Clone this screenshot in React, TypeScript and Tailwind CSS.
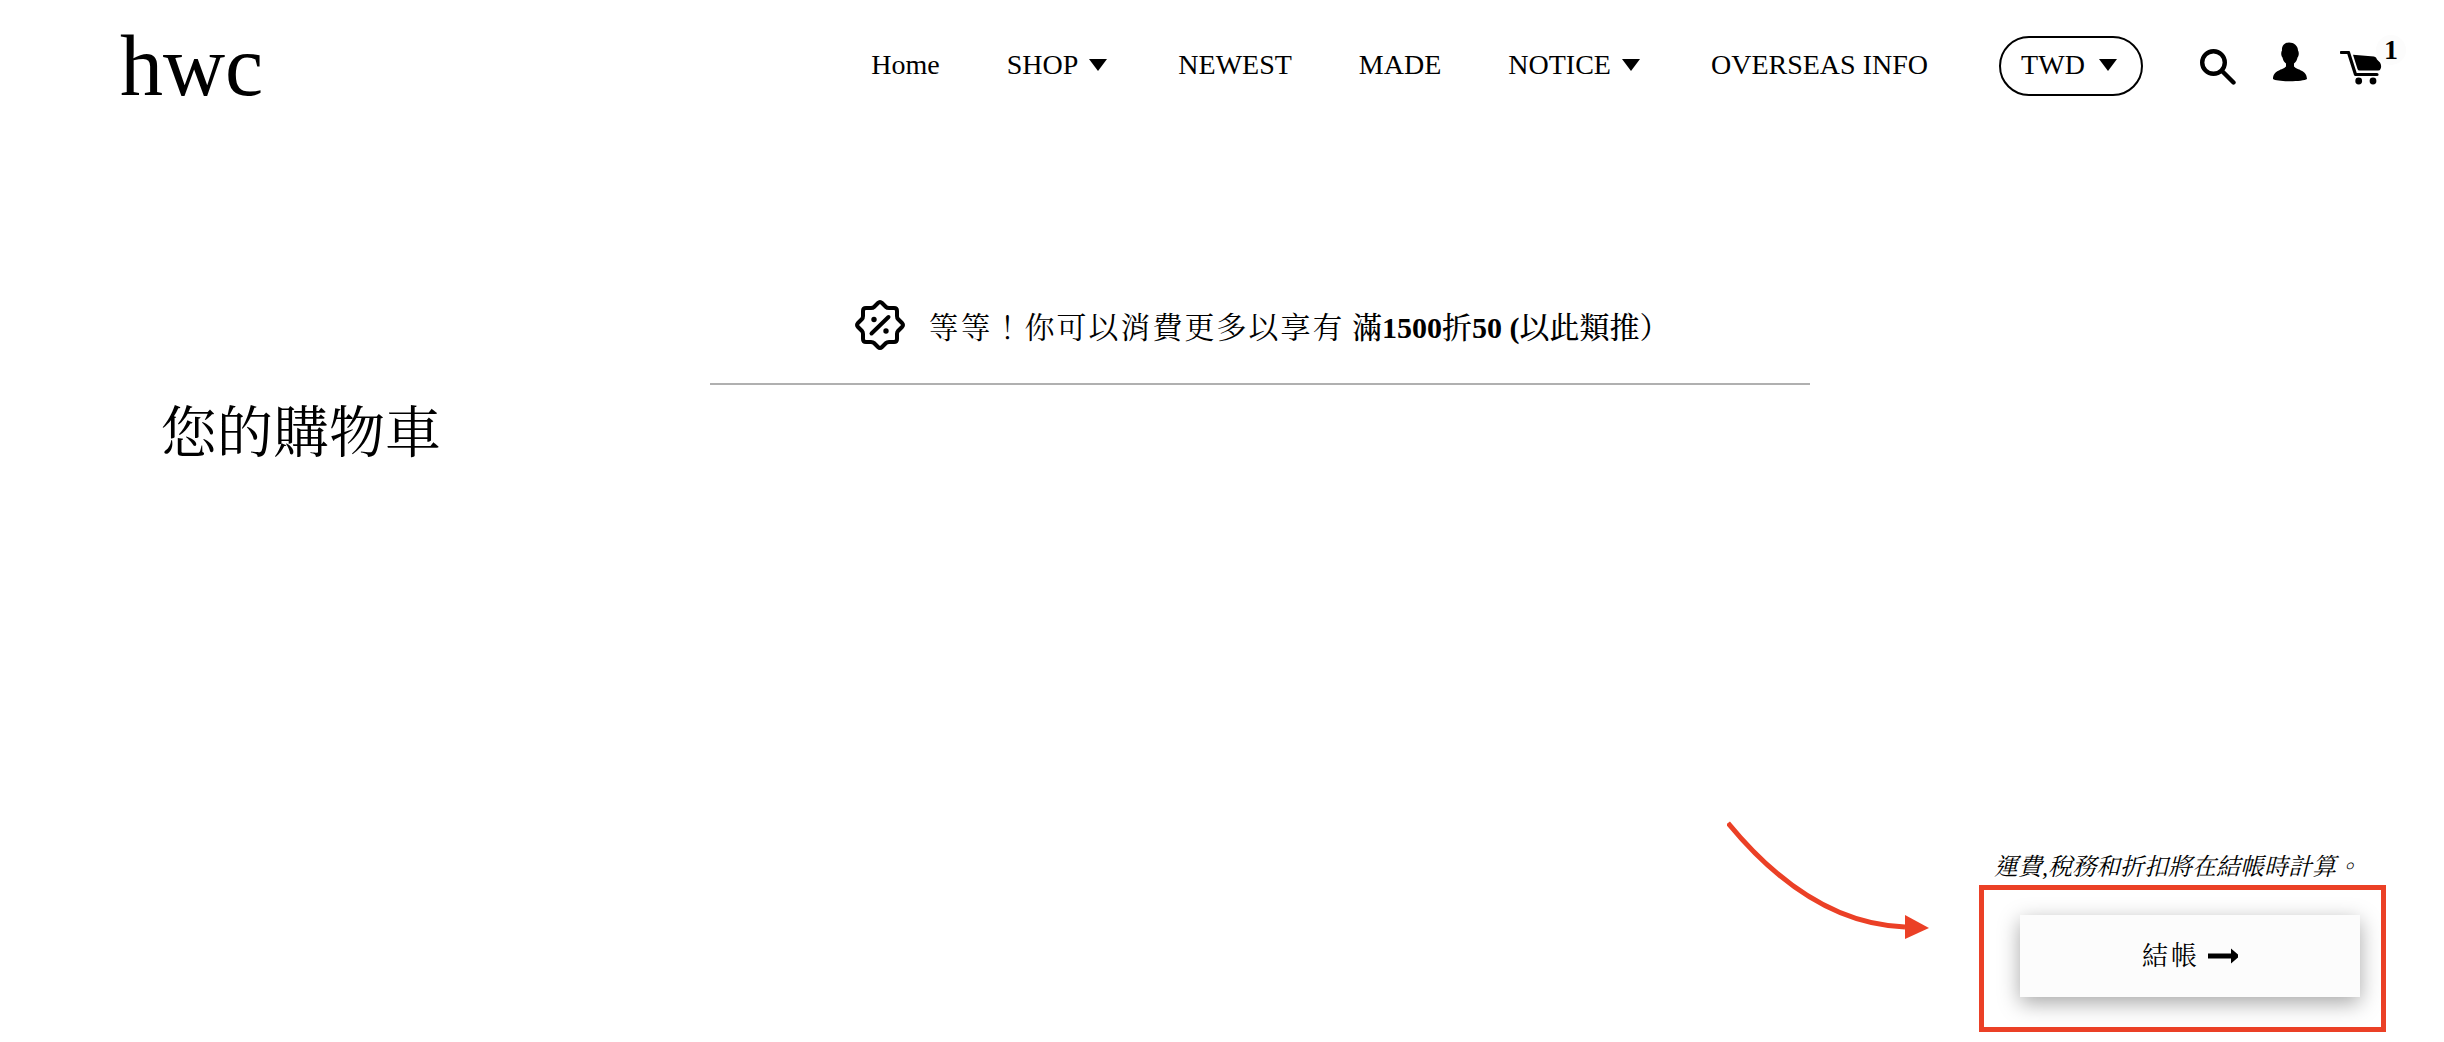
type NavItem = {
    label: string;
    href: string;
    dropdown?: boolean;
};

const navItems: NavItem[] = [
    { label: "Home", href: "#home" },
    { label: "SHOP", href: "#shop", dropdown: true },
    { label: "NEWEST", href: "#newest" },
    { label: "MADE", href: "#made" },
    { label: "NOTICE", href: "#notice", dropdown: true },
    { label: "OVERSEAS INFO", href: "#overseas" },
];

function Caret({ className }: { className?: string }) {
    return (
        <svg viewBox="0 0 18 12" className={className} aria-hidden="true">
            <path d="M0 0H18L9 12Z" fill="currentColor" />
        </svg>
    );
}

function SearchIcon() {
    return (
        <svg viewBox="0 0 36 36" className="size-9" fill="none" stroke="currentColor" strokeWidth="4.4" aria-hidden="true">
            <circle cx="13.5" cy="13.5" r="11.3" />
            <path d="M22 22L33.5 33.5" strokeLinecap="round" />
        </svg>
    );
}

function UserIcon() {
    return (
        <svg viewBox="0 0 36 40" className="h-10 w-9" fill="currentColor" aria-hidden="true">
            <path d="M17 0.5C22 0.5 26 4 26 8.5C27.2 10 27 14 25.5 15.5C25 18 24 20 22 21.5V24.5C25 28 35 28 35 37C31 40 5 40 1 37C1 28 11 28 14 24.5V21.5C12 20 11 18 10.5 15.5C9 14 8.8 10 10 8.5C9.5 4 12.5 0.5 17 0.5Z" />
        </svg>
    );
}

function CartIcon() {
    return (
        <svg viewBox="0 0 42 34" className="h-[34px] w-[42px]" fill="currentColor" aria-hidden="true">
            <path d="M1.5 1.5H8.5L15.5 23.5H37" fill="none" stroke="currentColor" strokeWidth="3.2" strokeLinecap="round" strokeLinejoin="round" />
            <path d="M13 3.7L34 5.6Q36.5 6 37 8.5L40 11.5Q42 15 40.5 18Q40 19.5 38 19.5H19.5Q18 19.5 17.5 18Z" />
            <circle cx="18.7" cy="30" r="3.4" />
            <circle cx="33" cy="30" r="3.4" />
        </svg>
    );
}

function DiscountIcon() {
    return (
        <svg viewBox="0 0 50 50" className="size-[50px]" fill="none" stroke="currentColor" strokeWidth="4" strokeLinecap="round" strokeLinejoin="round" aria-hidden="true">
            <path d="M8 11Q8 8 11 8H16Q18 8 19 7L23 3Q25 1 27 3L31 7Q32 8 34 8H39Q42 8 42 11V16Q42 18 43 19L47 23Q49 25 47 27L43 31Q42 32 42 34V39Q42 42 39 42H34Q32 42 31 43L27 47Q25 49 23 47L19 43Q18 42 16 42H11Q8 42 8 39V34Q8 32 7 31L3 27Q1 25 3 23L7 19Q8 18 8 16Z" />
            <path d="M16.5 33.5L33.5 17" />
            <circle cx="19" cy="19.5" r="2.7" fill="currentColor" stroke="none" />
            <circle cx="31" cy="31" r="2.7" fill="currentColor" stroke="none" />
        </svg>
    );
}

function Header() {
    return (
        <header className="flex items-center justify-between py-4 pr-[38px] pl-[120px]">
            <a href="#home" className="text-[86px] leading-[100px]">
                hwc
            </a>
            <div className="flex items-center">
                <nav className="flex items-center gap-[67px] pb-[2px] text-[28px] leading-8">
                    {navItems.map((item) => (
                        <a key={item.label} href={item.href} className="flex items-center gap-[11px]">
                            {item.label}
                            {item.dropdown && <Caret className="mr-1 h-3 w-[18px]" />}
                        </a>
                    ))}
                </nav>
                <button type="button" className="ml-[71px] flex h-[60px] w-36 items-center justify-center gap-[14px] rounded-full border-2 border-black pr-1 pb-[2px] text-[28px]">
                    TWD
                    <Caret className="h-3 w-[18px]" />
                </button>
                <button type="button" aria-label="搜尋" className="ml-[57px] pt-[2px]">
                    <SearchIcon />
                </button>
                <a href="#account" aria-label="帳戶" className="ml-9 pb-2">
                    <UserIcon />
                </a>
                <a href="#cart" aria-label="購物車" className="relative ml-8 pt-1 pr-6">
                    <CartIcon />
                    <span className="absolute -top-3 right-0 flex size-[30px] items-center justify-center rounded-full bg-[#fcfcfc] text-[28px] font-bold">
                        1
                    </span>
                </a>
            </div>
        </header>
    );
}

export default function App() {
    return (
        <div className="bg-white pb-3 font-['Liberation_Serif','Noto_Serif_CJK_TC','Noto_Sans_CJK_TC',serif] text-black">
            <Header />

            <main>
                {/* Promo */}
                <div className="ml-[76px] flex justify-center">
                    <div className="mt-[167px] flex w-[1100px] items-center justify-center gap-6 border-b-2 border-[#b0b0b0] pb-8 pl-1">
                        <DiscountIcon />
                        <p className="pt-[6px] text-[30px] leading-[46px]">
                            <span className="tracking-[2px]">等等！你可以消費更多以享有</span>{" "}
                            <strong>
                                <span className="font-medium">滿</span>1500<span className="font-medium">折</span>50 (
                                <span className="font-medium">以此類推）</span>
                            </strong>
                        </p>
                    </div>
                </div>

                <h1 className="mt-[10px] ml-[161px] text-[56px] leading-[76px]">您的購物車</h1>

                {/* Checkout */}
                <div className="mt-[350px] flex items-start justify-end pr-[58px]">
                    <svg viewBox="0 0 202 120" className="mr-[50px] h-[120px] w-[202px] text-[#eb4026]" aria-hidden="true">
                        <path d="M1 2Q84 103 178 106" fill="none" stroke="currentColor" strokeWidth="5" />
                        <path d="M178 94L202 107L178 118Z" fill="currentColor" />
                    </svg>
                    <div className="mt-7">
                        <p className="pr-[26px] text-right text-2xl leading-9 italic">運費,稅務和折扣將在結帳時計算。</p>
                        <div className="border-[5px] border-[#eb4026] pt-[25px] pr-[21px] pb-[30px] pl-9">
                            <button type="button" className="flex h-[82px] w-[340px] items-center justify-center gap-2 bg-[#fcfcfc] text-[26px] tracking-[3px] shadow-[0_6px_20px_rgba(0,0,0,0.35)]">
                                結帳
                                <svg viewBox="0 0 30 16" className="h-4 w-[30px]" fill="currentColor" aria-hidden="true">
                                    <path d="M0 5.5H23V0.5L30 6.5V9.5L23 15.5V10.5H0Z" />
                                </svg>
                            </button>
                        </div>
                    </div>
                </div>
            </main>
        </div>
    );
}
